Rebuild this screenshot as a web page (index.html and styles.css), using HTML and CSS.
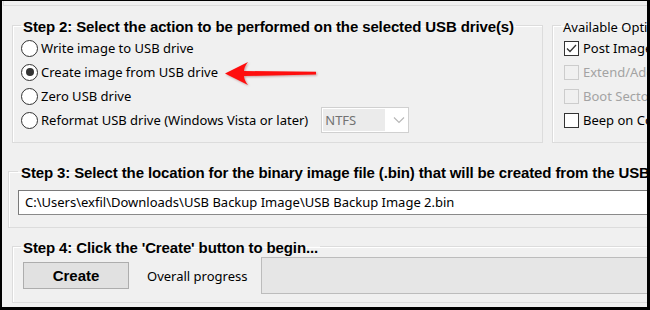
FILE: index.html
```html
<!DOCTYPE html>
<html lang="en">
<head>
  <meta charset="UTF-8" />
  <title>Win32 Disk Imager - Create image</title>
  <link rel="stylesheet" href="styles.css">
</head>
<body>
  <div class="window">
    <!-- bottom of the Step 1 group -->
    <div class="prev-group"></div>

    <div class="top-row">
      <!-- Step 2 -->
      <fieldset class="group step2">
        <legend class="group-title">Step 2: Select the action to be performed on the selected USB drive(s)</legend>
        <div class="option"><span class="radio"></span>Write image to USB drive</div>
        <div class="option"><span class="radio checked"></span>Create image from USB drive</div>
        <div class="option"><span class="radio"></span>Zero USB drive</div>
        <div class="option">
          <span class="radio"></span>Reformat USB drive (Windows Vista or later)
          <div class="combo">
            <span class="combo-value">NTFS</span>
            <svg class="combo-chevron" width="12" height="8" viewBox="0 0 12 8"><path d="M1 1.5 L6 6.5 L11 1.5" fill="none" stroke="#b8b8b8" stroke-width="1.2"/></svg>
          </div>
        </div>
      </fieldset>

      <!-- Available options -->
      <fieldset class="group options">
        <legend class="options-title">Available Options</legend>
        <div class="check-row">
          <span class="checkbox checked">
            <svg width="13" height="13" viewBox="0 0 13 13"><path d="M2 6.5 L5 9.5 L11 3" fill="none" stroke="#333" stroke-width="1.3"/></svg>
          </span>Post Image Verification
        </div>
        <div class="check-row disabled"><span class="checkbox"></span>Extend/Add partition</div>
        <div class="check-row disabled"><span class="checkbox"></span>Boot Sector Backup</div>
        <div class="check-row"><span class="checkbox"></span>Beep on Completion</div>
      </fieldset>
    </div>

    <!-- Step 3 -->
    <fieldset class="group step3">
      <legend class="group-title">Step 3: Select the location for the binary image file (.bin) that will be created from the USB drive</legend>
      <div class="path-field">C:\Users\exfil\Downloads\USB Backup Image\USB Backup Image 2.bin</div>
    </fieldset>

    <!-- Step 4 -->
    <fieldset class="group step4">
      <legend class="group-title">Step 4: Click the 'Create' button to begin...</legend>
      <div class="action-row">
        <button class="create-btn">Create</button>
        <span class="progress-label">Overall progress</span>
        <div class="progress-bar"></div>
      </div>
    </fieldset>

    <!-- red annotation arrow -->
    <svg class="arrow" width="94" height="26" viewBox="0 0 94 26">
      <path d="M1 12.5 L24 1 Q20 6 20 10 L92 10.8 L92 13.6 L20 15 Q20 19 24 24 Z" fill="#ff0d0d"/>
    </svg>
  </div>
</body>
</html>
```

FILE: styles.css
```css
:root {
  --window-bg: #f0f0f0;
  --group-line: #dcdcdc;
  --text-color: #000;
  --disabled-text: #a3a3a3;
}

html, body {
  margin: 0;
  padding: 0;
}

body {
  width: 650px;
  height: 310px;
  background: #000;
  font-family: 'Noto Sans', 'Open Sans', sans-serif;
  font-size: 13px;
  color: var(--text-color);
}

.window {
  position: relative;
  box-sizing: border-box;
  width: 650px;
  height: 310px;
  border-style: solid;
  border-color: #000;
  border-width: 1px 3px 3px 2px;
  background: var(--window-bg);
  overflow: hidden;
}

.prev-group {
  height: 4px;
  margin-left: 1px;
  border-left: 1px solid var(--group-line);
  border-bottom: 1px solid var(--group-line);
}

.top-row {
  display: flex;
  gap: 9px;
  margin: 9px 0 0 10px;
}

.group {
  margin: 0;
  min-width: 0;
  padding: 0 8px 10px 8px;
  border: 1px solid var(--group-line);
  box-shadow: inset 1px 1px 0 #fff;
}

.group-title {
  padding: 3px 2px 0;
  font-family: 'Liberation Sans', Arial, sans-serif;
  font-weight: bold;
  font-size: 15px;
  line-height: 18px;
  letter-spacing: -0.12px;
  white-space: nowrap;
}

.step2 {
  width: 531px;
  box-sizing: border-box;
  flex-shrink: 0;
}

.option {
  display: flex;
  align-items: center;
  height: 24px;
  white-space: nowrap;
}

.radio {
  box-sizing: border-box;
  width: 17px;
  height: 17px;
  margin-right: 3px;
  border: 1px solid #333;
  border-radius: 50%;
  background: #fff;
  display: flex;
  justify-content: center;
  align-items: center;
}

.radio.checked::after {
  content: '';
  width: 8px;
  height: 8px;
  border-radius: 50%;
  background: #333;
}

.combo {
  box-sizing: border-box;
  width: 88px;
  height: 26px;
  margin-left: 13px;
  padding: 1px;
  border: 1px solid #d0d0d0;
  background: #fff;
  display: flex;
  align-items: center;
}

.combo-value {
  width: 60px;
  height: 22px;
  line-height: 22px;
  padding-left: 2px;
  background: #ebebeb;
  color: #727272;
}

.combo-chevron {
  margin-left: 8px;
}

.options {
  width: 200px;
  box-sizing: border-box;
  flex-shrink: 0;
}

.options-title {
  padding: 3px 2px 0;
  line-height: 18px;
  white-space: nowrap;
}

.check-row {
  display: flex;
  align-items: center;
  height: 24px;
  padding-left: 3px;
  white-space: nowrap;
}

.checkbox {
  box-sizing: border-box;
  width: 15px;
  height: 15px;
  margin-right: 4px;
  border: 1px solid #333;
  background: #fff;
  display: flex;
  justify-content: center;
  align-items: center;
}

.check-row.disabled {
  color: var(--disabled-text);
}

.check-row.disabled .checkbox {
  border-color: #cccccc;
  background: var(--window-bg);
}

.step3 {
  width: 700px;
  margin: 18px 0 0 6px;
  padding: 8px 8px 12px 9px;
}

.step3 .group-title {
  padding-left: 3px;
}

.path-field {
  box-sizing: border-box;
  height: 25px;
  line-height: 23px;
  padding-left: 6px;
  border: 1px solid #7a7a7a;
  border-color: #7a7a7a #b5b5b5 #8a8a8a #7a7a7a;
  background: #fff;
  white-space: nowrap;
}

.step4 {
  width: 700px;
  margin: 8px 0 0 10px;
  padding: 0 8px 8px 8px;
}

.action-row {
  display: flex;
  align-items: center;
  gap: 18px;
}

.create-btn {
  box-sizing: border-box;
  width: 106px;
  height: 27px;
  margin-left: 2px;
  border: 1px solid #adadad;
  background: #e1e1e1;
  font-family: 'Liberation Sans', Arial, sans-serif;
  font-weight: bold;
  font-size: 15px;
  color: #000;
}

.progress-label {
  white-space: nowrap;
  margin-right: -4px;
}

.progress-bar {
  box-sizing: border-box;
  width: 420px;
  height: 37px;
  border: 1px solid #bcbcbc;
  background: #e6e6e6;
}

.arrow {
  position: absolute;
  left: 222px;
  top: 60px;
  filter: drop-shadow(1px 1px 1px rgba(120, 0, 0, 0.35));
}
```
